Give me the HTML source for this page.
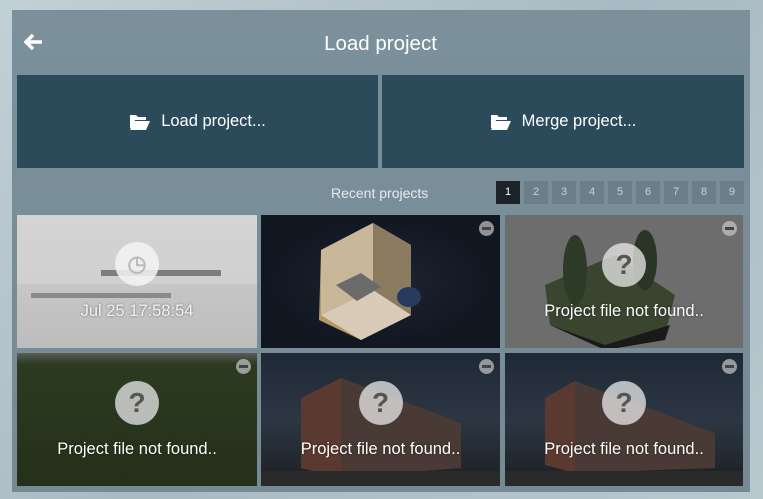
<!DOCTYPE html>
<html><head><meta charset="utf-8"><style>
*{margin:0;padding:0;box-sizing:border-box}
body{width:763px;height:499px;overflow:hidden;background:linear-gradient(135deg,#c2d0d7,#a9bac3 50%,#b9c8cf);font-family:"Liberation Sans",sans-serif;position:relative;color:#fff}
.panel{position:absolute;left:12px;top:10px;width:738px;height:482px;background:linear-gradient(180deg,#7b909a,#758a94)}
.title{position:absolute;left:0;width:761px;top:32px;text-align:center;font-size:20.5px}
.back{position:absolute;left:24px;top:33px}
.btn{position:absolute;top:75px;height:93px;background:#2b4b5b;display:flex;align-items:center;justify-content:center;font-size:16.5px}
.btn svg{margin-right:10px}
.rp{position:absolute;left:331px;top:185px;font-size:14px;color:#e4ecef}
.pg{position:absolute;top:181px;width:24px;height:23px;background:#6c7f89;color:#c8d2d7;font-size:11px;text-align:center;line-height:23px}
.pg.a{background:#1c2328;color:#fff}
.t{position:absolute;overflow:hidden}
.ov{position:absolute;left:0;right:0;text-align:center;font-size:16.5px;color:#fff;text-shadow:0 0 2px rgba(0,0,0,.5)}
.circ{position:absolute;width:44px;height:44px;border-radius:50%;background:rgba(235,235,235,.75);left:50%;margin-left:-22px;color:#555;font-weight:bold;font-size:28px;text-align:center;line-height:44px}
.min{position:absolute;right:6px;top:6px;width:15px;height:15px;border-radius:50%;background:rgba(200,200,200,.7)}
.min:after{content:"";position:absolute;left:3px;top:6px;width:9px;height:3px;background:#444}
</style></head><body>
<div class="panel"></div>
<svg class="back" width="20" height="18" viewBox="0 0 20 18"><path d="M9 2L2 9l7 7M2 9h16" stroke="#fff" stroke-width="3.5" fill="none"/></svg>
<div class="title">Load project</div>
<div class="btn" style="left:17px;width:361px"><svg width="22" height="18" viewBox="0 0 22 18"><path d="M1 2h6l2 2h8v3H6L3 15H1z" fill="#fff"/><path d="M5 8h16l-4 9H1z" fill="#fff"/></svg>Load project...</div>
<div class="btn" style="left:382px;width:362px"><svg width="22" height="18" viewBox="0 0 22 18"><path d="M1 2h6l2 2h8v3H6L3 15H1z" fill="#fff"/><path d="M5 8h16l-4 9H1z" fill="#fff"/></svg>Merge project...</div>
<div class="rp">Recent projects</div>
<div class="pg a" style="left:496px">1</div>
<div class="pg" style="left:524px">2</div>
<div class="pg" style="left:552px">3</div>
<div class="pg" style="left:580px">4</div>
<div class="pg" style="left:608px">5</div>
<div class="pg" style="left:636px">6</div>
<div class="pg" style="left:664px">7</div>
<div class="pg" style="left:692px">8</div>
<div class="pg" style="left:720px">9</div>

<div class="t" style="left:17px;top:215px;width:240px;height:133px;background:linear-gradient(180deg,#d4d4d4 0,#d0d0d0 52%,#c6c6c6 52%,#bdbdbd)">
 <div style="position:absolute;left:84px;top:55px;width:120px;height:6px;background:#7d7d7d"></div>
 <div style="position:absolute;left:14px;top:78px;width:140px;height:5px;background:#8a8a8a"></div>
 <div class="circ" style="top:27px;background:rgba(245,245,245,.85);color:#bbb;font-size:22px">&#9719;</div>
 <div class="ov" style="top:87px;color:#f4f4f4">Jul 25 17:58:54</div>
</div>
<div class="t" style="left:261px;top:215px;width:239px;height:133px;background:radial-gradient(ellipse at 50% 50%,#1d2430,#111721 70%)">
 <svg width="239" height="133" viewBox="0 0 239 133"><polygon points="60,35 112,8 150,30 150,100 100,125 58,105" fill="#b89868"/><polygon points="60,35 112,8 112,75 60,100" fill="#c9b79a"/><polygon points="112,8 150,30 150,100 112,75" fill="#8a7a60"/><polygon points="60,100 112,75 150,100 100,125" fill="#d8ccb8"/><polygon points="75,70 100,58 120,72 96,86" fill="#6b6b6b"/><ellipse cx="148" cy="82" rx="12" ry="10" fill="#253a5c"/></svg>
 <div class="min"></div>
</div>
<div class="t" style="left:505px;top:215px;width:238px;height:133px;background:#6d6d6d">
 <svg width="238" height="133" viewBox="0 0 238 133"><polygon points="40,70 110,40 170,80 160,120 100,135 45,110" fill="#3a4530"/><polygon points="45,110 100,130 165,110 160,125 100,135" fill="#1a1a1a"/><ellipse cx="70" cy="55" rx="12" ry="35" fill="#2d3a28"/><ellipse cx="140" cy="45" rx="12" ry="30" fill="#2a3526"/></svg>
 <div class="circ" style="top:28px">?</div>
 <div class="ov" style="top:87px">Project file not found..</div>
 <div class="min"></div>
</div>
<div class="t" style="left:17px;top:353px;width:240px;height:133px;background:linear-gradient(180deg,#5a5d58 0,#2d3a22 8%,#243019)">
 <div class="circ" style="top:28px">?</div>
 <div class="ov" style="top:87px">Project file not found..</div>
 <div class="min"></div>
</div>
<div class="t" style="left:261px;top:353px;width:239px;height:133px;background:linear-gradient(180deg,#1f2935,#2c3743 50%,#1b1f22)">
 <svg width="239" height="133" viewBox="0 0 239 133"><polygon points="40,45 80,25 80,125 40,115" fill="#5a3a30"/><polygon points="80,25 200,70 200,115 80,125" fill="#4a3a35"/><rect x="0" y="118" width="239" height="15" fill="#2a2a2a"/></svg>
 <div class="circ" style="top:28px">?</div>
 <div class="ov" style="top:87px">Project file not found..</div>
 <div class="min"></div>
</div>
<div class="t" style="left:505px;top:353px;width:238px;height:133px;background:linear-gradient(180deg,#1f2935,#2c3743 50%,#1b1f22)">
 <svg width="238" height="133" viewBox="0 0 238 133"><polygon points="40,45 70,28 70,120 40,112" fill="#5a3a30"/><polygon points="70,28 210,80 210,115 70,120" fill="#4a3a35"/><rect x="0" y="118" width="238" height="15" fill="#2a2a2a"/></svg>
 <div class="circ" style="top:28px">?</div>
 <div class="ov" style="top:87px">Project file not found..</div>
 <div class="min"></div>
</div>
</body></html>
